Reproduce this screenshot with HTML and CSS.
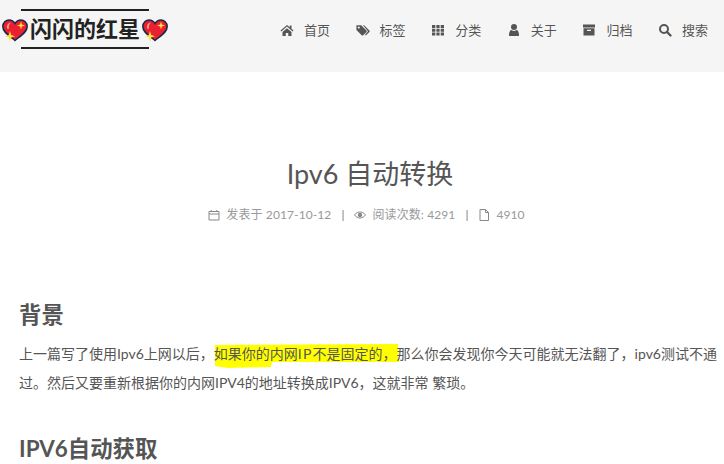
FILE: index.html
```html
<!DOCTYPE html>
<html lang="zh-CN">
  <head>
    <meta charset="UTF-8" />
    <meta name="viewport" content="width=device-width, initial-scale=1.0" />
    <title>Ipv6 自动转换</title>
    <link rel="stylesheet" href="styles.css">
  </head>
  <body>
    <svg class="defs" width="0" height="0" aria-hidden="true">
      <symbol id="heart" viewBox="0 0 26 24">
        <path d="M13 21.500C7 16.500 0.800 13 0.800 7.500C0.800 3.500 4 1 7 1C9.500 1 11.800 2.500 13 4.500C14.200 2.500 16.500 1 19 1C22 1 25.200 3.500 25.200 7.500C25.200 13 19 16.500 13 21.500Z" fill="#e8202f" stroke="#16294a" stroke-width="1.500"/>
        <path d="M5 9.500C4.500 6.500 6 3.800 8.800 3.800C7.200 5.500 6.500 7.500 7 10Z" fill="#f79a8a"/>
        <path d="M19 2.500L19.900 5.600L23 6.500L19.900 7.400L19 10.500L18.100 7.400L15 6.500L18.100 5.600Z" fill="#ffe03a"/>
        <path d="M8 12L9.200 16L13 17.200L9.200 18.400L8 22.800L6.800 18.400L3 17.200L6.800 16Z" fill="#ffe03a"/>
      </symbol>
    </svg>

    <!-- 顶部导航 -->
    <header class="site-header">
      <div class="brand-wrap">
        <svg class="brand-heart"><use href="#heart"/></svg>
        <div class="brand">闪闪的红星</div>
        <svg class="brand-heart"><use href="#heart"/></svg>
      </div>
      <nav class="menu">
        <a class="menu-item">
          <svg class="menu-icon" viewBox="0 0 14 14"><path d="M7 2L0.500 7.500L1.300 8.400L7 3.600L12.700 8.400L13.500 7.500L11.500 5.800V2.500H9.800V4.300ZM2.500 9V13H5.700V10H8.300V13H11.500V9L7 5.200Z" fill="#555"/></svg>
          <span>首页</span>
        </a>
        <a class="menu-item">
          <svg class="menu-icon" viewBox="0 0 16 14"><path d="M0.500 1.500H6L12 7.500C12.500 8 12.500 8.700 12 9.200L8.200 13C7.700 13.500 7 13.500 6.500 13L0.500 7ZM3.200 3A1.200 1.200 0 1 0 3.210 3Z" fill="#555" fill-rule="evenodd"/><path d="M8 1.500H9.300L15.300 7.500C15.800 8 15.800 8.700 15.300 9.200L11.200 13.300L10.300 12.500L13.700 8.400Z" fill="#555"/></svg>
          <span>标签</span>
        </a>
        <a class="menu-item">
          <svg class="menu-icon" viewBox="0 0 14 14"><path d="M1 2H4.300V5H1ZM5.400 2H8.600V5H5.400ZM9.700 2H13V5H9.700ZM1 5.800H4.300V8.800H1ZM5.400 5.800H8.600V8.800H5.400ZM9.700 5.800H13V8.800H9.700ZM1 9.600H4.300V12.600H1ZM5.400 9.600H8.600V12.600H5.400ZM9.700 9.600H13V12.600H9.700Z" fill="#555"/></svg>
          <span>分类</span>
        </a>
        <a class="menu-item">
          <svg class="menu-icon" viewBox="0 0 14 14"><circle cx="7" cy="4" r="3" fill="#555"/><path d="M2.500 13C2 13 2 12.500 2 12C2 9 3 7 4.700 7C5.300 7.700 6 8 7 8C8 8 8.700 7.700 9.300 7C11 7 12 9 12 12C12 12.500 12 13 11.500 13Z" fill="#555"/></svg>
          <span>关于</span>
        </a>
        <a class="menu-item">
          <svg class="menu-icon" viewBox="0 0 14 14"><path d="M1 1.500H13V4.500H1ZM1.500 5.300H12.500V12.500H1.500ZM5 6.800V8H9V6.800Z" fill="#555" fill-rule="evenodd"/></svg>
          <span>归档</span>
        </a>
        <a class="menu-item">
          <svg class="menu-icon" viewBox="0 0 14 14"><circle cx="6" cy="6" r="4" fill="none" stroke="#555" stroke-width="2"/><path d="M9 9L12.500 12.500" stroke="#555" stroke-width="2.400" stroke-linecap="round"/></svg>
          <span>搜索</span>
        </a>
      </nav>
    </header>

    <!-- 文章 -->
    <main class="post">
      <h1 class="post-title">Ipv6 自动转换</h1>
      <div class="post-meta">
        <svg class="meta-icon" viewBox="0 0 12 12"><path d="M1 2.500H11V11H1ZM1 5H11M3.300 1V3M8.700 1V3" fill="none" stroke="#888"/></svg>
        <span class="meta-text">发表于 2017-10-12</span>
        <span class="meta-sep">|</span>
        <svg class="meta-icon" viewBox="0 0 12 12"><path d="M0.500 6C3.500 2 8.500 2 11.500 6C8.500 10 3.500 10 0.500 6Z" fill="none" stroke="#888"/><circle cx="6" cy="6" r="2.200" fill="#888"/></svg>
        <span class="meta-text">阅读次数: 4291</span>
        <span class="meta-sep">|</span>
        <svg class="meta-icon" viewBox="0 0 12 12"><path d="M2 0.500H7.500L10.500 3.500V11.500H2ZM7.500 0.500V3.500H10.500" fill="none" stroke="#888"/></svg>
        <span class="meta-text">4910</span>
      </div>

      <h2 class="post-heading">背景</h2>
      <p class="post-text">上一篇写了使用Ipv6上网以后，<span class="marker"><svg class="marker-ink" viewBox="0 0 186 24" preserveAspectRatio="none"><path d="M1 1L184 0L185 18L58 18L57 23L14 24L1 22Z" fill="#ffff00"/></svg>如果你的内网<span class="wide">IP</span>不是固定的，</span>那么你会发现你今天可能就无法翻了，ipv6测试不通过。然后又要重新根据你的内网IPV4的地址转换成IPV6，这就非常 繁琐。</p>

      <h2 class="post-heading">IPV6自动获取</h2>
    </main>
  </body>
</html>
```

FILE: styles.css
```css
body {
  font-family: Lato, "Noto Sans CJK SC", sans-serif;
  margin: 0;
  background-color: #fff;
  color: #555;
  overflow: hidden;
}

.defs {
  position: absolute;
}

.site-header {
  display: flex;
  justify-content: space-between;
  height: 72px;
  background-color: #f5f5f5;
}

.brand-wrap {
  display: flex;
  align-items: center;
  height: 58px;
  padding-left: 2px;
}

.brand-heart {
  width: 26px;
  height: 24px;
  margin-top: 3px;
}

.brand {
  width: 128px;
  margin: 0 -7px;
  border-top: 2px solid #222;
  border-bottom: 2px solid #222;
  line-height: 36px;
  text-align: center;
  font-size: 22px;
  font-weight: 700;
  color: #222;
}

.menu {
  display: flex;
  align-items: flex-start;
  gap: 25.600px;
  padding: 20px 16px 0 0;
}

.menu-item {
  display: flex;
  align-items: center;
  gap: 10px;
  font-size: 13px;
  line-height: 20px;
  color: #555;
}

.menu-icon {
  width: 14px;
  height: 14px;
}

.post {
  padding: 0 5px 0 19px;
}

.post-title {
  margin: 82px 0 0;
  padding-left: 2px;
  text-align: center;
  font-size: 27px;
  font-weight: 400;
  line-height: 40px;
}

.post-meta {
  display: flex;
  justify-content: center;
  align-items: center;
  margin-top: 11px;
  padding-right: 5px;
  font-size: 12px;
  line-height: 20px;
  color: #999;
}

.meta-text {
  letter-spacing: 0.100px;
}

.meta-icon {
  width: 12px;
  height: 12px;
  margin-right: 6px;
}

.meta-sep {
  margin: 0 10px;
  color: #777;
}

.post-heading {
  margin: 0;
  font-size: 22.400px;
  font-weight: 700;
  line-height: 34px;
}

.post-meta + .post-heading {
  margin-top: 73px;
}

.post-text {
  margin: 7px 0 35px;
  font-size: 14px;
  line-height: 29px;
}

.marker {
  position: relative;
}

.marker-ink {
  position: absolute;
  left: 0;
  top: -1px;
  z-index: -1;
  width: 186px;
  height: 24px;
}

.wide {
  letter-spacing: 1.200px;
}
```
